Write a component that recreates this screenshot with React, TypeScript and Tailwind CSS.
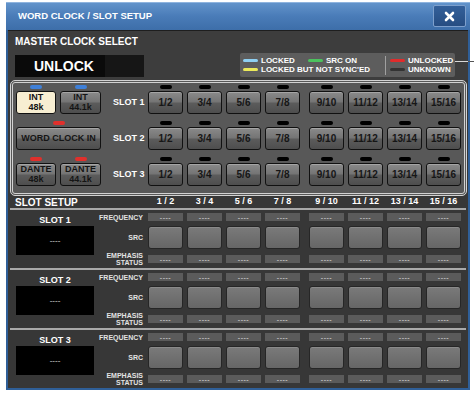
import React, { ReactNode } from "react"

const cols = ["1/2", "3/4", "5/6", "7/8", "9/10", "11/12", "13/14", "15/16"]

const glossy =
	"border border-[#111] rounded-[3px] bg-[linear-gradient(to_bottom,#8a8a8a_0%,#747474_48%,#5c5c5c_52%,#4e4e4e_100%)] shadow-[inset_0_1px_0_#a5a5a5]"

function Columns({ render }: { render: (col: string) => ReactNode }) {
	return (
		<div className="flex gap-[9px]">
			<div className="flex gap-[4px]">
				{cols.slice(0, 4).map((c) => (
					<React.Fragment key={c}>{render(c)}</React.Fragment>
				))}
			</div>
			<div className="flex gap-[4px]">
				{cols.slice(4).map((c) => (
					<React.Fragment key={c}>{render(c)}</React.Fragment>
				))}
			</div>
		</div>
	)
}

function Indicator({ color }: { color?: string }) {
	return <div className={`mb-[2px] h-[4px] w-[12px] rounded-full ${color ?? "bg-transparent"}`} />
}

function SourceButton({
	lines,
	width,
	color,
	selected,
}: {
	lines: string[]
	width: string
	color: string
	selected?: boolean
}) {
	return (
		<div className="flex flex-col items-center">
			<Indicator color={color} />
			<div
				className={`flex h-[23px] flex-col items-center justify-center text-[9px] leading-[9.5px] font-bold text-[#151515] ${width} ${
					selected ? "rounded-[3px] border border-[#111] bg-[#f7eed2]" : glossy
				}`}
			>
				{lines.map((l) => (
					<span key={l}>{l}</span>
				))}
			</div>
		</div>
	)
}

function ClockRow({ slot, children }: { slot: number; children: ReactNode }) {
	return (
		<div className="flex items-end">
			<div className="flex w-[85px] gap-[4px]">{children}</div>
			<div className="flex h-[23px] w-[47px] items-center pl-[12px] text-[9px] font-bold text-white">SLOT {slot}</div>
			<Columns
				render={(c) => (
					<div className="flex flex-col items-center">
						<Indicator color="bg-black" />
						<div className={`flex h-[23px] w-[35px] items-center justify-center text-[10px] font-bold text-[#161616] ${glossy}`}>
							{c}
						</div>
					</div>
				)}
			/>
		</div>
	)
}

function LegendItem({ color, label, width }: { color: string; label: string; width?: string }) {
	return (
		<div className={`flex items-center gap-[3px] ${width ?? ""}`}>
			<div className={`h-[3px] w-[15px] rounded-full ${color}`} />
			<span>{label}</span>
		</div>
	)
}

function Dashes({ className }: { className: string }) {
	return (
		<div className={`flex items-center justify-center text-[7px] leading-none font-bold tracking-[0.5px] ${className}`}>
			----
		</div>
	)
}

function SlotSection({ slot }: { slot: number }) {
	return (
		<div className="flex h-[58px]">
			<div className="ml-[8px] flex w-[78px] flex-col items-center">
				<div className="mt-[6px] flex h-[10px] items-center text-[9px] font-bold text-white">SLOT {slot}</div>
				<div className="flex h-[29px] w-full items-center justify-center bg-black text-[8px] font-bold text-[#9a9a9a]">
					----
				</div>
			</div>
			<div className="mr-[5px] flex w-[49px] flex-col items-end pt-[3px] text-[7px] leading-[7px] font-bold text-[#e2e2e2]">
				<div className="flex h-[8px] items-center">FREQUENCY</div>
				<div className="mt-[5px] flex h-[23px] items-center">SRC</div>
				<div className="mt-[6px] flex h-[8px] flex-col items-end justify-center">
					<span>EMPHASIS</span>
					<span>STATUS</span>
				</div>
			</div>
			<div className="pt-[3px]">
				<Columns
					render={(c) => (
						<div className="flex w-[35px] flex-col">
							<Dashes className="h-[8px] bg-[#5b5b5b] text-[#b8b8b8]" />
							<div className="mt-[5px] h-[23px] rounded-[3px] border border-[#262626] bg-[linear-gradient(to_bottom,#7a7a7a,#666)] shadow-[inset_0_1px_0_#8a8a8a]" />
							<Dashes className="mt-[6px] h-[8px] bg-[#5b5b5b] text-[#b8b8b8]" />
						</div>
					)}
				/>
			</div>
		</div>
	)
}

export default function App() {
	return (
		<div className="relative h-[399px] w-[474px] overflow-hidden bg-white font-['Liberation_Sans',Arial,sans-serif]">
			<div className="ml-[6px] flex w-[464px] flex-col pt-[2px]">
				{/* title bar */}
				<div className="flex h-[28px] items-center justify-between bg-[linear-gradient(to_bottom,#6495cc,#4a7cb8_50%,#3d6ea9)] pl-[12px] pr-[4px] shadow-[inset_0_1px_0_#8fb4de]">
					<span className="text-[9.5px] font-bold text-white">WORD CLOCK / SLOT SETUP</span>
					<div className="flex h-[22px] w-[33px] items-center justify-center rounded-[2px] border border-[#7d9fcc] bg-[linear-gradient(to_bottom,#34609a,#264d82)]">
						<svg width="11" height="11" viewBox="0 0 11 11">
							<path d="M2 2L9 9M9 2L2 9" stroke="white" strokeWidth="2.6" strokeLinecap="round" />
						</svg>
					</div>
				</div>

				<div className="flex flex-col border-x-2 border-b-2 border-[#2f5f98] bg-[#373737]">
					{/* master clock select */}
					<div className="flex h-[50px] flex-col border-t border-[#1e1e1e] bg-[#3d3d3d] pl-[7px]">
						<div className="flex h-[21px] items-center text-[10px] font-bold text-white">MASTER CLOCK SELECT</div>
						<div className="flex items-start">
							<div className="mt-[3px] flex h-[22px] w-[129px] bg-[#0a0a0a]">
								<div className="flex w-[90px] items-center pl-[19px] text-[14px] font-bold text-white">UNLOCK</div>
								<div className="flex-1 bg-[#161616]" />
							</div>
							<div className="mt-[1px] ml-[96px] flex h-[24px] w-[215px] items-center rounded-[2px] bg-[#5d5d5d] pl-[3px] text-[8px] leading-[9.5px] font-bold text-white">
								<div className="flex w-[142px] flex-col">
									<div className="flex">
										<LegendItem color="bg-[#8fd0f2]" label="LOCKED" width="w-[65px]" />
										<LegendItem color="bg-[#4cc25e]" label="SRC ON" />
									</div>
									<LegendItem color="bg-[#ecea5a]" label="LOCKED BUT NOT SYNC'ED" />
								</div>
								<div className="mr-[4px] h-[19px] w-px bg-[#a0a0a0]" />
								<div className="flex flex-col">
									<LegendItem color="bg-[#e02c2c]" label="UNLOCKED" />
									<LegendItem color="bg-[#333]" label="UNKNOWN" />
								</div>
							</div>
						</div>
					</div>

					{/* clock source panel */}
					<div className="ml-[2px] flex h-[116px] w-[457px] flex-col gap-[7px] rounded-[5px] border-[3px] border-double border-[#d2d2d2] bg-[#585858] pt-[2px] pl-[3px]">
						<ClockRow slot={1}>
							<SourceButton lines={["INT", "48k"]} width="w-[40px]" color="bg-[#3f80d8]" selected />
							<SourceButton lines={["INT", "44.1k"]} width="w-[41px]" color="bg-[#3f80d8]" />
						</ClockRow>
						<ClockRow slot={2}>
							<SourceButton lines={["WORD CLOCK IN"]} width="w-[85px]" color="bg-[#e0302c]" />
						</ClockRow>
						<ClockRow slot={3}>
							<SourceButton lines={["DANTE", "48k"]} width="w-[40px]" color="bg-[#e0302c]" />
							<SourceButton lines={["DANTE", "44.1k"]} width="w-[41px]" color="bg-[#e0302c]" />
						</ClockRow>
					</div>

					{/* slot setup */}
					<div className="flex h-[12px] items-center">
						<div className="w-[140px] pl-[7px] text-[10px] font-bold text-white">SLOT SETUP</div>
						<Columns
							render={(c) => (
								<div className="w-[35px] text-center text-[9px] font-bold text-white">{c.replace("/", " / ")}</div>
							)}
						/>
					</div>
					<div className="mx-[2px] h-[2px] bg-[#a9a9a9]" />
					<SlotSection slot={1} />
					<div className="mx-[2px] h-[2px] bg-[#a9a9a9]" />
					<SlotSection slot={2} />
					<div className="mx-[2px] h-[2px] bg-[#a9a9a9]" />
					<SlotSection slot={3} />
				</div>
			</div>

			{/* leader line from legend */}
			<div className="absolute top-[61px] left-[455px] flex h-px w-[19px]">
				<div className="w-[13px] bg-[#d8d8d8]" />
				<div className="flex-1 bg-[#555]" />
			</div>
		</div>
	)
}
